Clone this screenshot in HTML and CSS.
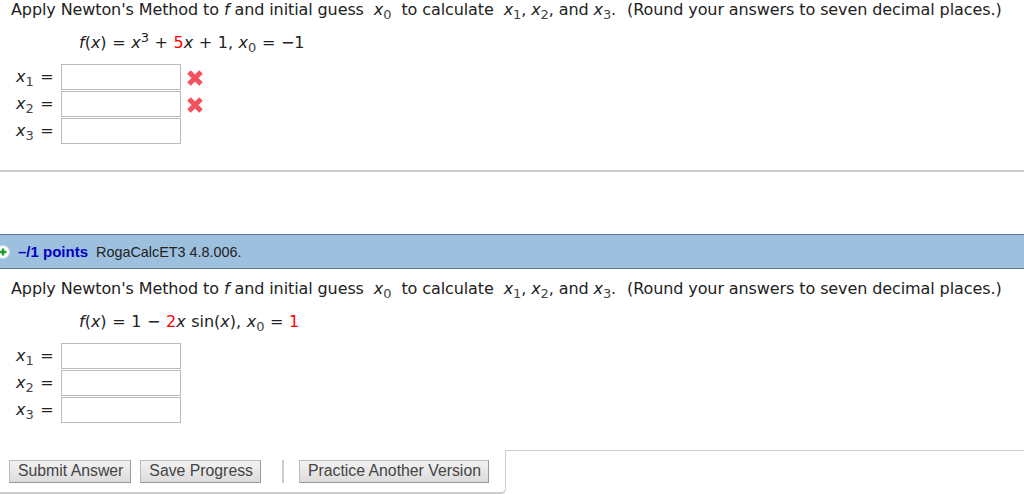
FILE: index.html
```html
<!DOCTYPE html>
<html lang="en">
<head>
    <meta charset="UTF-8">
    <meta name="viewport" content="width=device-width, initial-scale=1.0">
    <title>Newton's Method</title>
    <link rel="stylesheet" href="styles.css">
</head>
<body>
    <section class="question first">
        <p class="prompt">Apply Newton's Method to <i>f</i> and initial guess <span class="var"><i>x</i><sub>0</sub></span> to calculate <span class="var first-var"><i>x</i><sub>1</sub>,</span> <i>x</i><sub>2</sub>, and <span class="last-var"><i>x</i><sub>3</sub>.</span>&nbsp; (Round your answers to seven decimal places.)</p>
        <p class="formula"><i>f</i>(<i>x</i>) = <i>x</i><sup>3</sup> + <span class="red">5</span><i>x</i> + 1, <i>x</i><sub>0</sub> = &minus;1</p>
        <div class="answers">
            <div class="answer">
                <label><i>x</i><sub>1</sub> =</label>
                <input type="text">
                <svg class="wrong" width="18" height="18" viewBox="0 0 18 18"><path d="M3 3l12 12M15 3l-12 12"/></svg>
            </div>
            <div class="answer">
                <label><i>x</i><sub>2</sub> =</label>
                <input type="text">
                <svg class="wrong" width="18" height="18" viewBox="0 0 18 18"><path d="M3 3l12 12M15 3l-12 12"/></svg>
            </div>
            <div class="answer">
                <label><i>x</i><sub>3</sub> =</label>
                <input type="text">
            </div>
        </div>
    </section>

    <div class="qhead">
        <svg class="plus" width="14" height="14" viewBox="0 0 14 14"><circle cx="7" cy="7" r="6.500" fill="#fff" stroke="#c9d3da"/><path d="M7 3.500v7M3.500 7h7" stroke="#1f9a2e" stroke-width="2.400"/></svg>
        <b class="points">&ndash;/1 points</b>
        <span class="ref">RogaCalcET3 4.8.006.</span>
    </div>

    <section class="question second">
        <p class="prompt">Apply Newton's Method to <i>f</i> and initial guess <span class="var"><i>x</i><sub>0</sub></span> to calculate <span class="var first-var"><i>x</i><sub>1</sub>,</span> <i>x</i><sub>2</sub>, and <span class="last-var"><i>x</i><sub>3</sub>.</span>&nbsp; (Round your answers to seven decimal places.)</p>
        <p class="formula"><i>f</i>(<i>x</i>) = 1 &minus; <span class="red">2</span><i>x</i> sin(<i>x</i>), <i>x</i><sub>0</sub> = <span class="red">1</span></p>
        <div class="answers">
            <div class="answer">
                <label><i>x</i><sub>1</sub> =</label>
                <input type="text">
            </div>
            <div class="answer">
                <label><i>x</i><sub>2</sub> =</label>
                <input type="text">
            </div>
            <div class="answer">
                <label><i>x</i><sub>3</sub> =</label>
                <input type="text">
            </div>
        </div>
    </section>

    <div class="footer">
        <div class="actions">
            <button>Submit Answer</button>
            <button>Save Progress</button>
            <span class="sep"></span>
            <button>Practice Another Version</button>
        </div>
        <div class="rest"></div>
    </div>
</body>
</html>
```

FILE: styles.css
```css
body { font-family: 'DejaVu Sans', Verdana, sans-serif; font-size: 16px; margin: 0; background: white; color: #222; overflow: hidden; }
p { margin: 0; }
sub, sup { font-size: 13px; line-height: 0; }
sub { color: #444; }
.red { color: #f00; }
.var { margin: 0 5px; }
.first-var { margin-right: 0; }
.last-var { margin: 0 1px 0 0; }
.question { padding-left: 11px; }
.question.first { height: 170px; border-bottom: 2px solid #ccc; margin-bottom: 62px; }
.question.second { padding-top: 10px; }
.prompt { height: 19px; line-height: 19px; white-space: nowrap; letter-spacing: -0.1px; }
.formula { margin: 14px 0 0 68px; height: 19px; line-height: 19px; white-space: nowrap; word-spacing: 0.5px; }
.answers { margin-top: 11px; }
.answer { display: flex; align-items: center; height: 27px; }
.answer label { width: 50px; padding-left: 5px; box-sizing: border-box; white-space: nowrap; word-spacing: 1.500px; }
.answer input { width: 120px; height: 26px; box-sizing: border-box; margin: 0; padding: 0; border: 1px solid #bbb; background: white; }
.wrong { margin: 2px 0 0 5px; }
.wrong path { fill: none; stroke: #f4515e; stroke-width: 5; }
.qhead { display: flex; align-items: center; height: 33px; background: #9dc0de; border-top: 1px solid #5f7a8f; border-bottom: 1px solid #5f7a8f; font-family: 'Liberation Sans', Arial, sans-serif; font-size: 14.400px; }
.plus { margin-left: -4px; flex: none; }
.points { color: #0000c8; margin-left: 8px; font-size: 15px; }
.ref { margin-left: 8px; }
.footer { display: flex; height: 45px; margin-top: 27px; }
.actions { display: flex; align-items: center; box-sizing: border-box; width: 506px; height: 44px; padding-left: 9px; border-right: 1px solid #ccc; border-bottom: 2px solid #ccc; border-bottom-right-radius: 5px; }
.actions button { height: 23px; padding: 0 7px 0 8px; margin-right: 9px; font-family: 'Liberation Sans', Arial, sans-serif; font-size: 15.800px; color: #444; background: linear-gradient(#f2f2f2, #dcdcdc); border: 1px solid #bbb; border-bottom-color: #999; border-right-color: #999; }
.sep { width: 2px; height: 23px; background: #ccc; margin: 0 15px 0 12px; }
.rest { flex: 1; border-top: 1px solid #ccc; }
```
